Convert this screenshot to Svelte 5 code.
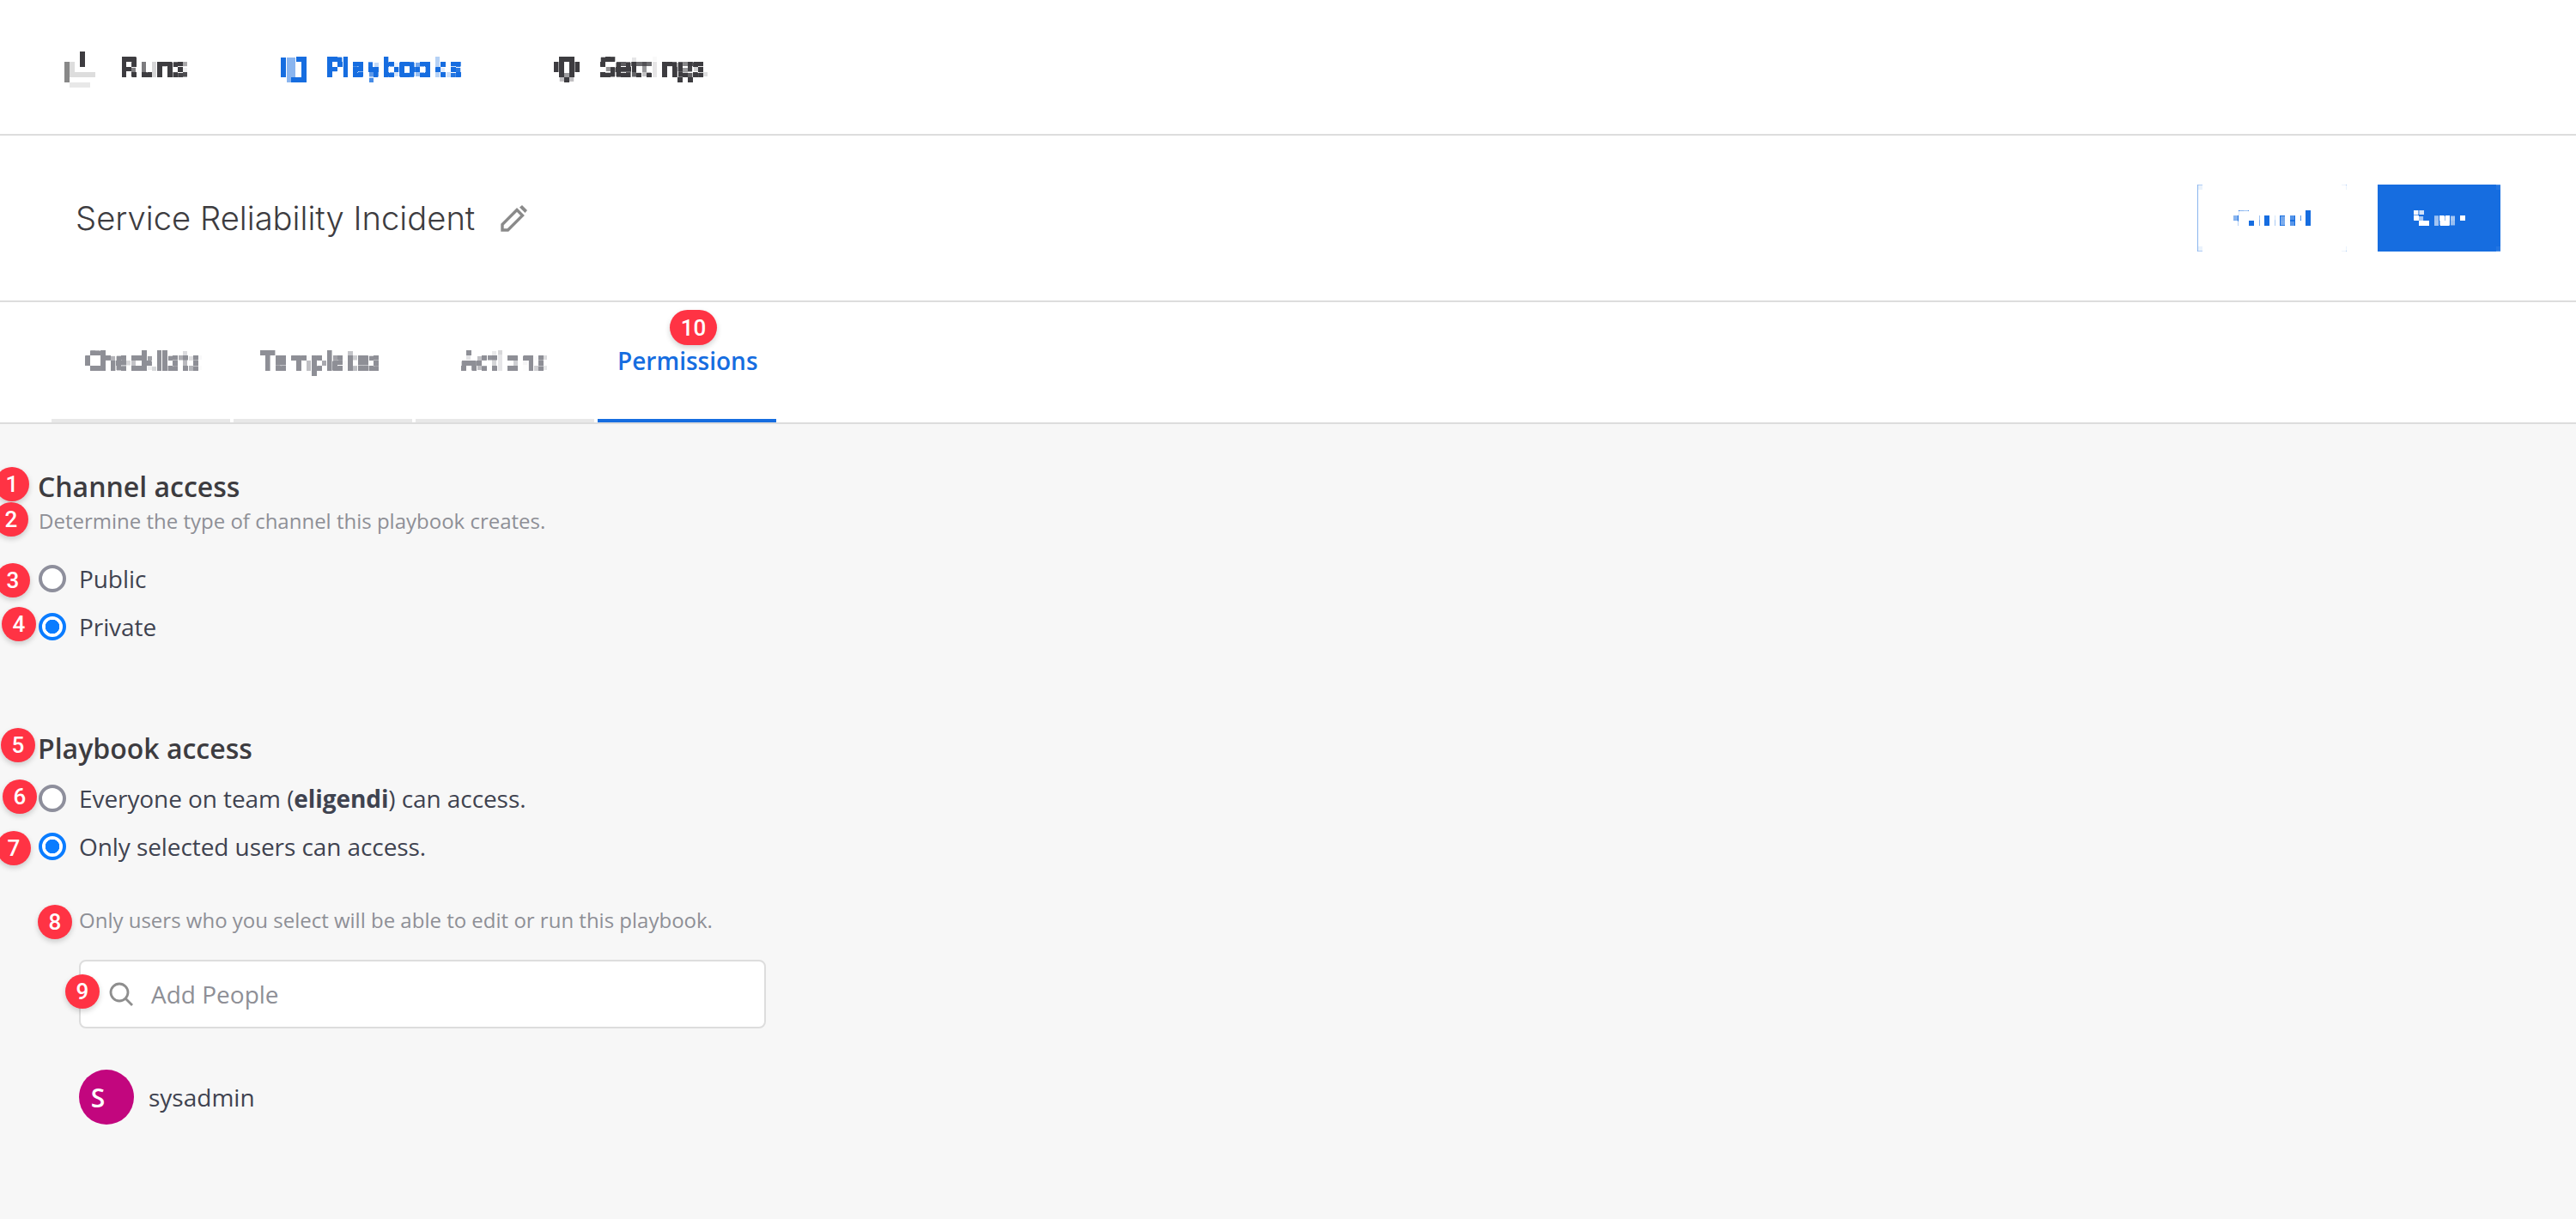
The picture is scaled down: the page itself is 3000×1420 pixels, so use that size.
<script>
  const badges = [
    { n: 1, x: -6, y: 544 },
    { n: 2, x: -7, y: 585 },
    { n: 3, x: -5, y: 656 },
    { n: 4, x: 2, y: 707 },
    { n: 5, x: 1, y: 848 },
    { n: 6, x: 3, y: 908 },
    { n: 7, x: -4, y: 968 },
    { n: 8, x: 44, y: 1054 },
    { n: 9, x: 76, y: 1135 }
  ];

  const tabs = [
    { label: 'Checklists', pad: 39 },
    { label: 'Templates', pad: 31 },
    { label: 'Actions', pad: 53 }
  ];
</script>

<svg class="defs" width="0" height="0" aria-hidden="true">
  <filter id="mosaic" x="0" y="0" width="100%" height="100%" color-interpolation-filters="sRGB">
    <feGaussianBlur in="SourceGraphic" stdDeviation="0.7" result="soft" />
    <feFlood x="2" y="2" width="2" height="2" flood-color="#000" />
    <feComposite width="6" height="6" />
    <feTile result="grid" />
    <feComposite in="soft" in2="grid" operator="in" />
    <feMorphology operator="dilate" radius="2" />
  </filter>
</svg>

<div class="page">
  <header class="topnav">
    <nav class="mosaic nav-items">
      <a class="nav-item run" href="#runs">
        <svg width="36" height="42" viewBox="0 0 36 42" fill="none">
          <path d="M21 2v16" stroke="#3d3c40" stroke-width="8" />
          <path d="M9 10v18h27" stroke="#ddd" stroke-width="6" />
          <path d="M3 14v24" stroke="#888" stroke-width="6" />
          <path d="M6 39h24" stroke="#e8e8e8" stroke-width="6" />
        </svg>
        <span>Runs</span>
      </a>
      <a class="nav-item active" href="#playbooks">
        <svg width="30" height="30" viewBox="0 0 30 30" fill="none" stroke="currentColor" stroke-width="5">
          <path d="M3 3v20M13 3v24h14V3H21" />
        </svg>
        <span>Playbooks</span>
      </a>
      <a class="nav-item" href="#settings">
        <svg width="30" height="30" viewBox="0 0 30 30" fill="none" stroke="currentColor" stroke-width="5">
          <rect x="8" y="2" width="14" height="22" rx="3" />
          <path d="M2 8v10M28 8v10M15 26v4" stroke-width="3" />
        </svg>
        <span>Settings</span>
      </a>
    </nav>
  </header>

  <section class="titlebar">
    <h1>Service Reliability Incident</h1>
    <svg class="pencil" width="32" height="32" viewBox="0 0 32 32">
      <path d="M2 23.5L19 6.5l6.5 6.5L8.5 30H2z" fill="none" stroke="#8a8a8a" stroke-width="3.4" />
      <path d="M22 3.5L25 1l6 6-2.5 3z" fill="#8a8a8a" />
    </svg>
    <div class="mosaic actions">
      <button class="btn cancel">Cancel</button>
      <button class="btn save">Save</button>
    </div>
  </section>

  <div class="tabs">
    {#each tabs as tab}
      <div class="tab" style="padding-left: {tab.pad}px"><span class="mosaic tab-label">{tab.label}</span></div>
    {/each}
    <div class="tab current">
      <span class="marker wide">10</span>
      <span class="tab-label">Permissions</span>
    </div>
  </div>

  <main class="content">
    <section class="channel">
      <h2>Channel access</h2>
      <p class="hint">Determine the type of channel this playbook creates.</p>
      <label class="radio first"><span class="dot"></span>Public</label>
      <label class="radio"><span class="dot on"></span>Private</label>
    </section>

    <section class="playbook">
      <h2>Playbook access</h2>
      <label class="radio near"><span class="dot"></span><span>Everyone on team (<b>eligendi</b>) can access.</span></label>
      <label class="radio"><span class="dot on"></span>Only selected users can access.</label>

      <div class="selected">
        <p class="hint">Only users who you select will be able to edit or run this playbook.</p>
        <div class="search">
          <svg width="28" height="28" viewBox="0 0 28 28" fill="none" stroke="#8e8e8e" stroke-width="2.8">
            <circle cx="12" cy="12" r="10" />
            <path d="M19 19l8 8" />
          </svg>
          <span>Add People</span>
        </div>
        <div class="user">
          <span class="avatar">S</span>
          <span>sysadmin</span>
        </div>
      </div>
    </section>
  </main>

  {#each badges as b}
    <span class="marker" style="left: {b.x}px; top: {b.y}px">{b.n}</span>
  {/each}
</div>

<style>
  :global(body) {
    margin: 0;
    background: #f7f7f7;
    font-family: "Open Sans", sans-serif;
    color: #3f4350;
  }

  .defs {
    position: absolute;
  }

  .page {
    position: relative;
    height: 1420px;
    overflow: hidden;
  }

  .mosaic {
    filter: url(#mosaic);
  }

  .topnav {
    height: 96px;
    background: #fff;
    border-bottom: 2px solid #ddd;
    padding: 60px 0 0 75px;
  }

  .nav-items {
    display: flex;
    gap: 108px;
    width: 780px;
    height: 42px;
  }

  .nav-item {
    display: flex;
    align-items: flex-start;
    gap: 24px;
    height: 42px;
    color: #3d3c40;
    font-size: 32px;
    font-weight: 600;
    line-height: 36px;
    text-decoration: none;
  }

  .nav-item svg {
    flex: none;
    margin-top: 6px;
  }

  .nav-item.run svg {
    margin-top: 0;
    margin-right: 6px;
  }

  .nav-item.active {
    color: #166de0;
  }

  .titlebar {
    display: flex;
    align-items: center;
    height: 192px;
    padding: 0 87px 0 88px;
    background: #fff;
    border-bottom: 2px solid #ddd;
  }

  h1 {
    margin: 0;
    font-family: Inter, sans-serif;
    font-size: 38.2px;
    font-weight: 300;
    color: #3d3c40;
  }

  .pencil {
    margin-left: 30px;
  }

  .actions {
    display: flex;
    gap: 36px;
    margin-left: auto;
    width: 354px;
    height: 78px;
  }

  .btn {
    height: 78px;
    border-radius: 4px;
    font: 600 28px "Open Sans", sans-serif;
  }

  .cancel {
    width: 173px;
    margin-left: 1px;
    background: #fff;
    border: 2px solid rgba(22, 109, 224, 0.5);
    color: #166de0;
  }

  .save {
    width: 141px;
    background: #166de0;
    border: 0;
    color: #fff;
  }

  .tabs {
    display: flex;
    gap: 4px;
    height: 140px;
    padding: 0 60px;
    background: #fff;
    border-bottom: 2px solid #ddd;
  }

  .tab {
    position: relative;
    box-sizing: border-box;
    width: 208px;
    height: 140px;
    padding: 50px 0 0 23px;
    border-bottom: 4px solid #e8e8e8;
    font-size: 28px;
    font-weight: 600;
    color: #8e8f96;
  }

  .tab.current {
    border-bottom-color: #166de0;
    color: #166de0;
  }

  .tab-label {
    display: block;
    width: max-content;
    line-height: 36px;
  }

  .content {
    padding: 0 0 0 45px;
  }

  h2 {
    margin: 0 0 0 -1px;
    font-size: 32px;
    font-weight: 600;
    line-height: 44px;
    color: #3d3c40;
  }

  .channel {
    padding-top: 51px;
  }

  .playbook {
    padding-top: 92px;
  }

  .hint {
    margin: 0;
    font-size: 24px;
    line-height: 36px;
    color: #8e8f96;
  }

  .radio {
    display: flex;
    align-items: center;
    gap: 15px;
    height: 56px;
    font-size: 28px;
    letter-spacing: -0.08px;
  }

  .radio.first {
    margin-top: 21px;
  }

  .radio.near {
    margin-top: 8px;
  }

  .dot {
    flex: none;
    box-sizing: border-box;
    width: 32px;
    height: 32px;
    border: 4px solid #8e8f9c;
    border-radius: 50%;
    background: #fff;
  }

  .dot.on {
    border-color: #0a7cff;
    background: radial-gradient(circle, #0a7cff 8px, #fff 8.5px);
  }

  .selected {
    margin-left: 47px;
    padding-top: 40px;
  }

  .search {
    display: flex;
    align-items: center;
    gap: 21px;
    box-sizing: border-box;
    width: 800px;
    height: 80px;
    margin-top: 28px;
    padding-left: 33px;
    background: #fff;
    border: 2px solid #ddd;
    border-radius: 8px;
    font-size: 28px;
    color: #8e8f96;
  }

  .user {
    display: flex;
    align-items: center;
    gap: 17px;
    margin-top: 48px;
    font-size: 28px;
  }

  .avatar {
    display: flex;
    align-items: center;
    justify-content: center;
    box-sizing: border-box;
    width: 64px;
    height: 64px;
    padding-right: 20px;
    border-radius: 50%;
    background: #c2067e;
    color: #fff;
    font-size: 30px;
    font-weight: 600;
  }

  .marker {
    position: absolute;
    display: flex;
    align-items: center;
    justify-content: center;
    width: 40px;
    height: 40px;
    border-radius: 50%;
    background: #ff3344;
    box-shadow: 0 3px 6px rgba(0, 0, 0, 0.18);
    color: #fff;
    font-family: Roboto, sans-serif;
    font-size: 26px;
    font-weight: 500;
    line-height: 1;
  }

  .marker.wide {
    left: 84px;
    top: 9px;
    width: 55px;
    height: 41px;
    border-radius: 21px;
  }
</style>
